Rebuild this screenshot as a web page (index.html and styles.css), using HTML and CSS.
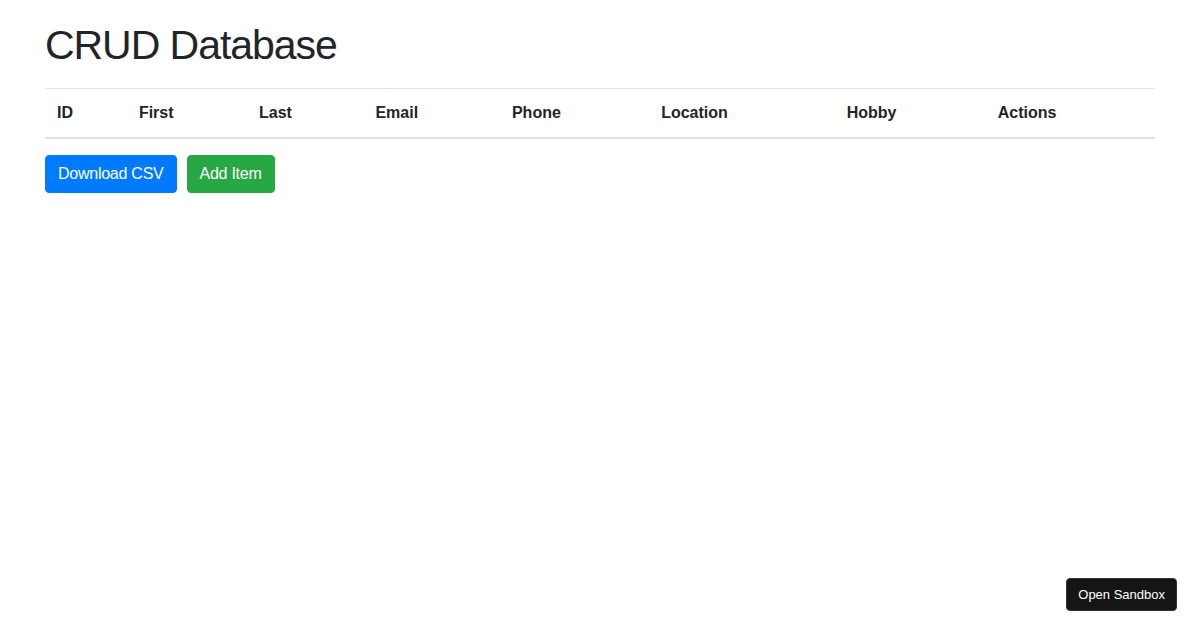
FILE: index.html
```html
<!DOCTYPE html>
<html lang="en">
<head>
    <meta charset="UTF-8">
    <meta name="viewport" content="width=device-width, initial-scale=1.0">
    <title>CRUD Database</title>
    <link rel="stylesheet" href="styles.css">
</head>
<body>

    <div class="container">
        <h1>CRUD Database</h1>

        <!-- Tabelle, noch ohne Einträge -->
        <table class="table">
            <thead>
                <tr>
                    <th>ID</th>
                    <th>First</th>
                    <th>Last</th>
                    <th>Email</th>
                    <th>Phone</th>
                    <th>Location</th>
                    <th>Hobby</th>
                    <th>Actions</th>
                </tr>
            </thead>
            <tbody></tbody>
        </table>

        <div class="actions">
            <button class="btn btn-primary">Download CSV</button>
            <button class="btn btn-success">Add Item</button>
        </div>
    </div>

    <a class="sandbox-link" href="#">Open Sandbox</a>

</body>
</html>
```

FILE: styles.css
```css
body {
    margin: 0;
    font-family: 'Liberation Sans', Arial, sans-serif;
    font-size: 16px;
    line-height: 1.5;
    color: #212529;
    background-color: #ffffff;
}

.container {
    max-width: 1110px;
    margin: 0 auto;
    padding: 21px 15px 0 15px;
}

h1 {
    margin: 0 0 18px 0;
    font-size: 41px;
    font-weight: normal;
    line-height: 1.2;
    letter-spacing: -1.05px;
}

.table {
    width: 100%;
    margin-bottom: 16px;
    border-collapse: collapse;
}

.table th {
    padding: 12px;
    text-align: left;
    font-weight: bold;
    vertical-align: bottom;
    border-top: 1px solid #dee2e6;
    border-bottom: 2px solid #dee2e6;
}

.actions {
    display: flex;
    gap: 10px;
}

.btn {
    padding: 6px 12px;
    font-family: inherit;
    font-size: 16px;
    line-height: 1.5;
    letter-spacing: -0.25px;
    color: #ffffff;
    border: 1px solid transparent;
    border-radius: 4px;
    cursor: pointer;
}

.btn-primary {
    background-color: #007bff; /* Blau */
    border-color: #007bff;
}

.btn-success {
    background-color: #28a745; /* Grün */
    border-color: #28a745;
}

/* Overlay-Knopf unten rechts */
.sandbox-link {
    position: fixed;
    right: 23px;
    bottom: 19px;
    padding: 7px 11px;
    font-size: 13px;
    line-height: 17px;
    color: #ffffff;
    text-decoration: none;
    background-color: #151515;
    border: 1px solid #333333;
    border-radius: 4px;
}
```
